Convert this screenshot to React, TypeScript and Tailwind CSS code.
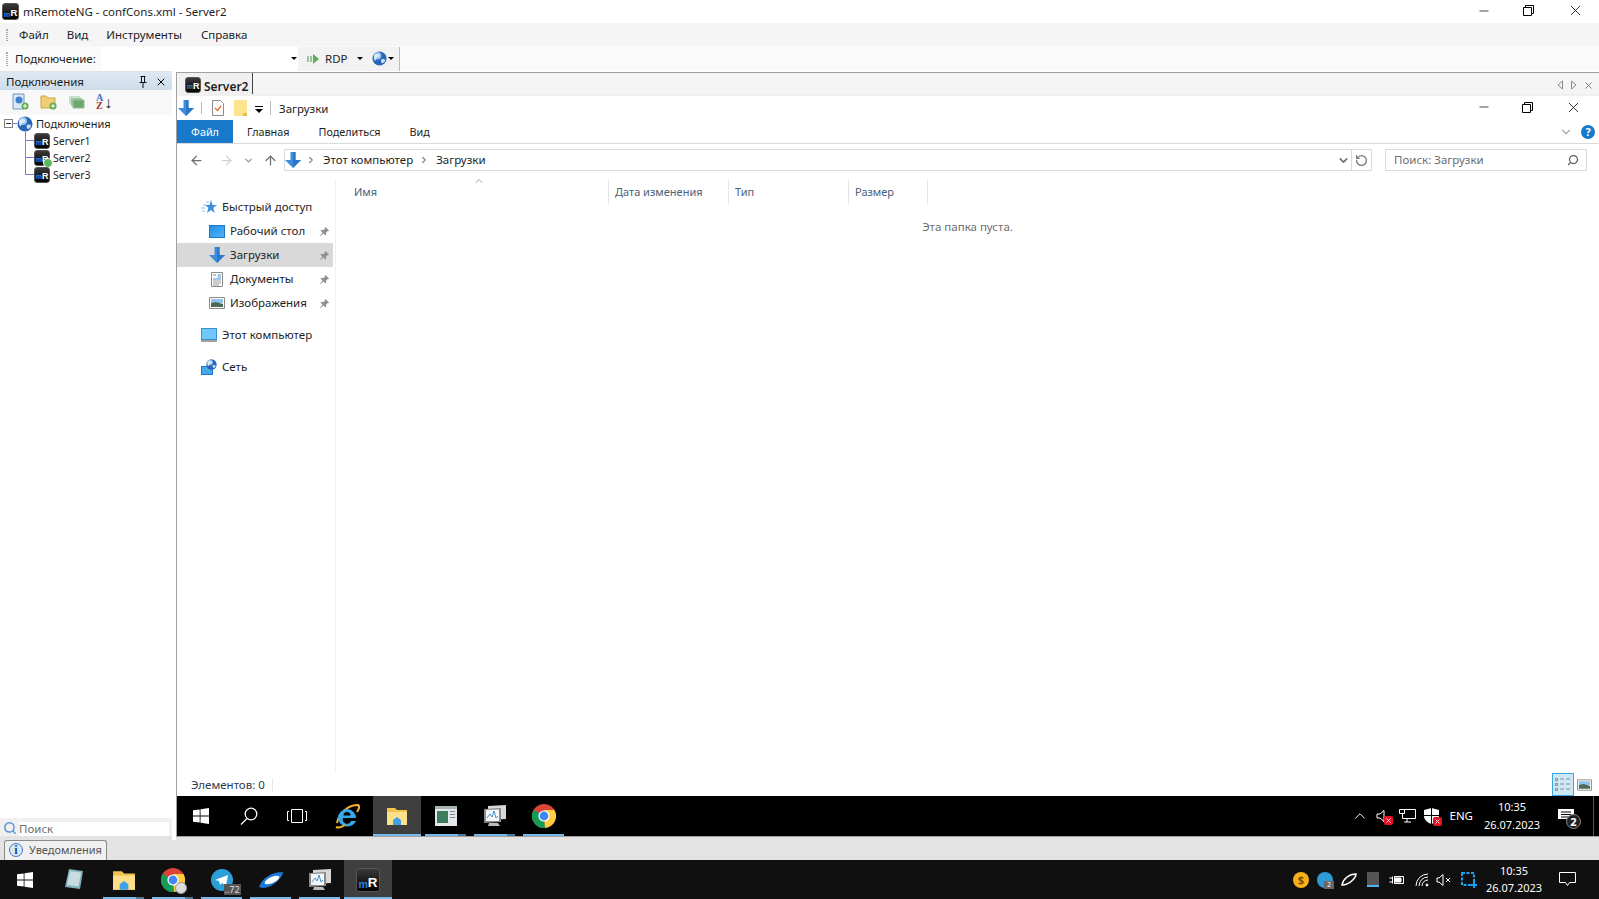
import React from "react";
import { Search, RotateCw, ArrowLeft, ArrowRight, ArrowUp, ChevronDown, ChevronUp, Minus, X, ChevronRight } from "lucide-react";

const MRIcon = ({ size = 16 }: { size?: number }) => (
  <span
    className="flex shrink-0 items-end justify-center rounded-[3px] border border-[#555] bg-gradient-to-b from-[#3a3a3a] to-[#050505] pb-[1px] font-['Liberation_Sans',sans-serif] font-bold leading-none"
    style={{ width: size, height: size, fontSize: size * 0.56 }}
  >
    <span className="text-[#2f7ee0]" style={{ fontSize: size * 0.44 }}>m</span>
    <span className="text-white">R</span>
  </span>
);

const DownArrow = ({ size = 18 }: { size?: number }) => (
  <svg width={size} height={size} viewBox="0 0 16 16" className="shrink-0">
    <path d="M5.5 0h5v8H16l-8 8-8-8h5.5z" fill="#3d8fdc" />
    <path d="M8 0h2.5v8H16l-8 8z" fill="#2a78c6" />
  </svg>
);

const Globe = ({ size = 16 }: { size?: number }) => (
  <svg width={size} height={size} viewBox="0 0 16 16" className="shrink-0">
    <circle cx="8" cy="8" r="7.5" fill="#2a66b8" />
    <circle cx="6" cy="5" r="4" fill="#8fc0ee" />
    <path d="M3 4c2-2 4-1 5 0s0 3-2 3-1 2-2 3-2-1-2-3 0-2 1-3zM10 9c2-1 4 0 4 1s-2 3-3 3-2-3-1-4z" fill="#e8f1fa" opacity=".85" />
  </svg>
);

const WinLogo = ({ size = 16 }: { size?: number }) => (
  <svg width={size} height={size} viewBox="0 0 16 16" className="shrink-0">
    <path d="M0 2.3l6.7-.9v6.2H0zM7.5 1.3L16 0v7.6H7.5zM0 8.4h6.7v6.2L0 13.7zM7.5 8.4H16V16l-8.5-1.2z" fill="#fff" />
  </svg>
);

const FolderIcon = ({ size = 22 }: { size?: number }) => (
  <svg width={size} height={size} viewBox="0 0 22 22" className="shrink-0">
    <path d="M1 3h8l2 2h10v15H1z" fill="#f3c44f" />
    <path d="M1 7h20v13H1z" fill="#fde08a" />
    <path d="M7 20v-5l4-3 4 3v5z" fill="#3ea1e6" />
  </svg>
);

const MonitorApp = ({ size = 24 }: { size?: number }) => (
  <svg width={size} height={size} viewBox="0 0 24 24" className="shrink-0">
    <path d="M5 2l18-1v14L5 16z" fill="#d8d8d8" />
    <path d="M1 5l17-1v14L1 19z" fill="#8a8a8a" />
    <path d="M3 6l13-.6V17H3z" fill="#f4f6f8" />
    <path d="M4 14l3-4 2 3 2-6 2 7 2-2" fill="none" stroke="#4a90d0" strokeWidth="1" />
    <path d="M6 19h9l2 3H5z" fill="#bbb" />
  </svg>
);

const ChromeIcon = ({ size = 24 }: { size?: number }) => (
  <svg width={size} height={size} viewBox="0 0 24 24" className="shrink-0">
    <circle cx="12" cy="12" r="12" fill="#db4437" />
    <path d="M12 12L1.6 18A12 12 0 0 1 1.6 6z" fill="#0f9d58" />
    <path d="M12 12l-10.4 6A12 12 0 0 0 13 24z" fill="#0f9d58" />
    <path d="M12 6h10.4A12 12 0 0 1 13 24l-1-12z" fill="#ffcd40" />
    <circle cx="12" cy="12" r="5.6" fill="#fff" />
    <circle cx="12" cy="12" r="4.4" fill="#4285f4" />
  </svg>
);

const IEIcon = () => (
  <svg width="26" height="26" viewBox="0 0 26 26" className="shrink-0">
    <path d="M3 20C5 10 14 2 24 2c2 1 1 4-1 7" fill="none" stroke="#f0b429" strokeWidth="2" />
    <path d="M4 15a9 9 0 0 1 18 0H9a4 4 0 0 0 8 3h5a9.5 9.5 0 0 1-18-3zm5.5-2.5h7a3.5 3.5 0 0 0-7 0z" fill="#35a8e8" />
    <path d="M2 24c2 1 6 0 9-2" fill="none" stroke="#f0b429" strokeWidth="2" />
  </svg>
);

const AppWindow = () => (
  <svg width="24" height="24" viewBox="0 0 24 24" className="shrink-0">
    <path d="M1 2h22v20H1z" fill="#e4e8ea" />
    <path d="M1 2h22v3H1z" fill="#a9b4b8" />
    <path d="M3 7h11v12H3z" fill="#3b7d5c" />
    <path d="M16 7h5v1h-5zM16 10h5v1h-5zM16 13h5v1h-5z" fill="#7d8a90" />
  </svg>
);

const PinIcon = ({ size = 11, color = "#8a9299" }: { size?: number; color?: string }) => (
  <svg width={size} height={size} viewBox="0 0 12 12" className="shrink-0">
    <path d="M7 1l4 4-1 .6-.6-.2L7.5 7.5 7.8 9.6 7 10.4 4.8 8.2 1.5 11 1 10.5 3.8 7.2 1.6 5 2.4 4.2 4.5 4.5 6.600 2.600 6.400 2z" fill={color} />
  </svg>
);

const NavRow = ({
  icon,
  label,
  pinned,
  active,
  indent,
}: {
  icon: React.ReactNode;
  label: string;
  pinned?: boolean;
  active?: boolean;
  indent?: boolean;
}) => (
  <div className={`flex h-[24px] items-center ${active ? "bg-[#d9d9d9]" : ""} ${indent ? "pl-[29px]" : "pl-[21px]"}`}>
    <span className="flex w-[22px] justify-center">{icon}</span>
    <span className="ml-[2px] flex-1 whitespace-nowrap">{label}</span>
    {pinned && <PinIcon />}
    {pinned && <span className="w-[3px]" />}
  </div>
);

const TaskSlot = ({
  children,
  active,
  running,
  double,
  width = 48,
}: {
  children: React.ReactNode;
  active?: boolean;
  running?: boolean;
  double?: boolean;
  width?: number;
}) => (
  <div
    className={`relative flex h-full shrink-0 items-center justify-center ${active ? "bg-[#3f3f3f]" : ""}`}
    style={{ width }}
  >
    {children}
    {running && (
      <span className={`absolute bottom-0 h-[2px] bg-[#76b9ed] ${active ? "inset-x-0" : "inset-x-[4px]"}`} />
    )}
    {double && <span className="absolute bottom-0 right-[4px] h-[2px] w-[8px] bg-[#4a7896]" />}
  </div>
);

const RedX = () => (
  <span className="absolute -bottom-[2px] -right-[3px] flex h-[9px] w-[9px] items-center justify-center rounded-[2px] bg-[#e81123]">
    <X size={7} strokeWidth={3} className="text-white" />
  </span>
);

const App = () => {
  return (
    <div className="flex h-[899px] w-[1599px] flex-col overflow-hidden bg-[#e3e3e3] font-['Noto_Sans',sans-serif] text-[11.5px] leading-none text-[#1e1e1e]">
      {/* title */}
      <div className="flex h-[23px] items-center bg-white pl-[2px]">
        <MRIcon size={17} />
        <span className="ml-[4px] pt-[1px]">mRemoteNG - confCons.xml - Server2</span>
        <div className="ml-auto mb-[2px] flex items-center">
          <Minus size={14} strokeWidth={1.2} className="mr-[32px] text-black" />
          <svg width="11" height="11" viewBox="0 0 11 11" className="mr-[33px]" fill="none" stroke="#000">
            <path d="M.5 2.5h8v8h-8zM2.5 2.5v-2h8v8h-2" />
          </svg>
          <X size={17} strokeWidth={1.1} className="mr-[15px] text-black" />
        </div>
      </div>
      {/* menu */}
      <div className="flex h-[23px] items-center bg-[#f5f5f5] pl-[6px]">
        <span className="h-[12px] w-[2px] border-x border-dotted border-[#aaa]" />
        <span className="ml-[11px]">Файл</span>
        <span className="ml-[18px]">Вид</span>
        <span className="ml-[18px]">Инструменты</span>
        <span className="ml-[19px]">Справка</span>
      </div>
      {/* toolbar */}
      <div className="flex h-[25px] items-center bg-[#fafafa] pl-[6px]">
        <span className="h-[14px] w-[2px] border-x border-dotted border-[#aaa]" />
        <span className="w-[93px] pl-[7px]">Подключение:</span>
        <div className="flex h-[24px] w-[197px] items-center justify-end bg-white pr-[1px]">
          <span className="h-0 w-0 border-x-[3px] border-t-[3px] border-x-transparent border-t-black" />
        </div>
        <div className="flex h-[24px] w-[102px] items-center border-r border-[#bbb] bg-[#f2f2f2] pl-[9px]">
          <svg width="13" height="12" viewBox="0 0 13 12" className="shrink-0">
            <path d="M0 3h2v6H0zM3 3h2v6H3z" fill="#9bc29b" />
            <path d="M6 1l6 5-6 5z" fill="#5cad5c" />
          </svg>
          <span className="ml-[5px]">RDP</span>
          <span className="ml-[9px] h-0 w-0 border-x-[3px] border-t-[3px] border-x-transparent border-t-black" />
          <span className="ml-[9px]"><Globe size={15} /></span>
          <span className="ml-[1px] h-0 w-0 border-x-[3px] border-t-[3px] border-x-transparent border-t-black" />
        </div>
      </div>
      {/* middle */}
      <div className="flex min-h-0 flex-1">
        <div className="flex w-[172px] shrink-0 flex-col">
          <div className="mt-[1px] flex h-[18px] items-center bg-gradient-to-b from-[#dee8f2] to-[#cfdcea] pl-[6px] pr-[5px] pt-[1px]">
            <span>Подключения</span>
            <svg width="8" height="12" viewBox="0 0 8 12" className="ml-auto shrink-0">
              <path d="M1.5.5h5M2.5.5v6M5.5.5v6M.5 6.5h7" stroke="#111" fill="none" />
              <path d="M4 7v5" stroke="#111" />
              <path d="M5 1h1v5H5z" fill="#111" />
            </svg>
            <X size={12} strokeWidth={2} className="ml-[8px] text-black" />
          </div>
          <div className="flex h-[25px] items-center bg-[#f8f8f8] pb-[2px] pl-[12px]">
            <svg width="17" height="17" viewBox="0 0 17 17" className="shrink-0">
              <path d="M1 1h11v15H1z" fill="#dbe8f6" stroke="#6f95c4" />
              <circle cx="7" cy="7" r="3.5" fill="#3f7fcb" />
              <circle cx="13" cy="13" r="3.5" fill="#62ad50" />
              <path d="M11 13h4M13 11v4" stroke="#fff" />
            </svg>
            <svg width="17" height="16" viewBox="0 0 17 16" className="ml-[11px] shrink-0">
              <path d="M1 2h5l2 2h7v10H1z" fill="#f0cf77" stroke="#c9a540" />
              <circle cx="13" cy="12" r="3.5" fill="#62ad50" />
              <path d="M11 12h4M13 10v4" stroke="#fff" />
            </svg>
            <svg width="17" height="14" viewBox="0 0 17 14" className="ml-[11px] shrink-0">
              <path d="M1 1h11v8H1z" fill="#c8e0c8" />
              <path d="M3 3h11v8H3z" fill="#9cc79c" />
              <path d="M5 5h11v8H5z" fill="#6ea86e" stroke="#8fbf8f" />
            </svg>
            <span className="ml-[11px] flex items-center">
              <span className="flex flex-col font-['Liberation_Serif',serif] text-[10px] font-bold leading-[8px]">
                <span className="text-[#3c6fc0]">A</span>
                <span className="text-[#a03030]">Z</span>
              </span>
              <span className="ml-[1px] text-[16px] leading-none">↓</span>
            </span>
          </div>
          <div className="flex flex-1 flex-col bg-white">
            <div className="flex h-[17px] items-center pl-[4px]">
              <span className="flex h-[9px] w-[9px] items-center justify-center border border-[#808080] text-[8px]">
                <span className="h-[1px] w-[5px] bg-[#333]" />
              </span>
              <span className="h-[1px] w-[4px] bg-[#7b7be8]" />
              <Globe size={16} />
              <span className="ml-[3px] text-[11px]">Подключения</span>
            </div>
            {["Server1", "Server2", "Server3"].map((name, i) => (
              <div key={name} className="relative flex h-[17px] items-center pl-[34px]">
                <span className={`absolute left-[25px] top-0 w-[1px] bg-[#7b7be8] ${i === 2 ? "h-[9px]" : "h-full"}`} />
                <span className="absolute left-[25px] top-[8px] h-[1px] w-[9px] bg-[#7b7be8]" />
                <span className="relative">
                  <MRIcon size={16} />
                  {i === 1 && (
                    <span className="absolute -bottom-[2px] -right-[3px] h-[10px] w-[10px] rounded-full border border-white bg-[#5cb85c]" />
                  )}
                </span>
                <span className="ml-[3px] pt-[2px] text-[10.5px]">{name}</span>
              </div>
            ))}
          </div>
          <div className="flex h-[18px] items-end bg-[#f0f0f0] pl-[3px]">
            <Search size={14} strokeWidth={2.5} className="mb-[1px] text-[#5c93d6]" />
            <span className="ml-[2px] flex h-[14px] w-[150px] items-center bg-white text-[#6d6d6d]">Поиск</span>
          </div>
          <div className="h-[4px]" />
        </div>
        <div className="flex min-w-0 flex-1 flex-col bg-white">
          <div className="ml-[4px] mt-[1px] flex min-h-0 flex-1 flex-col border-l border-t border-[#a0a0a0] bg-white">
            {/* tab strip */}
            <div className="flex h-[23px] shrink-0 items-stretch border-b-2 border-[#f0f0f0] bg-[#f5f5f5]">
              <div className="ml-[2px] flex w-[74px] items-center border-r border-[#444] bg-[#f0f0f0] pl-[6px] pt-[2px]">
                <MRIcon size={16} />
                <span className="ml-[3px] pt-[4px] text-[12px] font-semibold">Server2</span>
              </div>
              <div className="ml-auto flex items-center pr-[5px] pt-[3px] text-[#777]">
                <svg width="7" height="10" viewBox="0 0 7 10" fill="none" stroke="#8a8a8a"><path d="M5.5 1L1 5l4.5 4z" /></svg>
                <svg width="7" height="10" viewBox="0 0 7 10" fill="none" stroke="#8a8a8a" className="ml-[6px]"><path d="M1.5 1L6 5 1.5 9z" /></svg>
                <X size={11} strokeWidth={2} className="ml-[6px]" />
              </div>
            </div>
            {/* explorer quick access */}
            <div className="flex h-[24px] shrink-0 items-center bg-white pl-[1px]">
              <DownArrow size={16} />
              <span className="ml-[7px] h-[12px] w-[1px] bg-[#bbb]" />
              <svg width="14" height="16" viewBox="0 0 14 16" className="ml-[9px] shrink-0">
                <path d="M1.5.5h8l3 3v12h-11z" fill="#fff" stroke="#8a8a8a" />
                <path d="M4 8l2.5 2.5L10 6" fill="none" stroke="#e8672e" strokeWidth="1.3" />
              </svg>
              <svg width="13" height="16" viewBox="0 0 13 16" className="ml-[9px] shrink-0">
                <path d="M0 0h13v16H0z" fill="#fde58f" />
                <path d="M9 13h4v3H9z" fill="#e8bd4e" />
              </svg>
              <svg width="8" height="7" viewBox="0 0 8 7" className="ml-[8px] mt-[3px] shrink-0">
                <path d="M0 0h8v1H0zM0 3h8L4 7z" fill="#000" />
              </svg>
              <span className="ml-[7px] h-[14px] w-[1px] bg-[#bbb]" />
              <span className="ml-[8px] pt-[2px]">Загрузки</span>
              <div className="ml-auto mb-[2px] flex items-center">
                <Minus size={14} strokeWidth={1.2} className="mr-[31px] text-black" />
                <svg width="11" height="11" viewBox="0 0 11 11" className="mr-[32px]" fill="none" stroke="#000">
                  <path d="M.5 2.5h8v8h-8zM2.5 2.5v-2h8v8h-2" />
                </svg>
                <X size={17} strokeWidth={1.1} className="mr-[17px] text-black" />
              </div>
            </div>
            {/* ribbon tabs */}
            <div className="flex h-[24px] shrink-0 items-stretch border-b border-[#dadada] pr-[4px] text-[10.8px]">
              <span className="flex w-[56px] items-center justify-center bg-[#1979ca] pt-[1px] text-white">Файл</span>
              <span className="ml-[14px] flex items-center pt-[1px]">Главная</span>
              <span className="ml-[29px] flex items-center pt-[1px]">Поделиться</span>
              <span className="ml-[29px] flex items-center pt-[1px]">Вид</span>
              <div className="ml-auto flex items-center">
                <ChevronDown size={14} className="text-[#a8a8a8]" />
                <span className="ml-[8px] flex h-[14px] w-[14px] items-center justify-center rounded-full bg-[#1979ca] text-[11px] font-bold text-white">?</span>
              </div>
            </div>
            {/* address bar */}
            <div className="flex h-[35px] shrink-0 items-center pb-[3px] pl-[12px] pr-[12px]">
              <ArrowLeft size={15} className="text-[#6d6d6d]" />
              <ArrowRight size={15} className="ml-[15px] text-[#d2d2d2]" />
              <ChevronDown size={11} strokeWidth={3} className="ml-[9px] text-[#9a9a9a]" />
              <ArrowUp size={15} className="ml-[9px] text-[#6d6d6d]" />
              <div className="ml-[6px] flex h-[22px] flex-1 items-center border border-[#d9d9d9]">
                <DownArrow size={16} />
                <ChevronRight size={10} strokeWidth={3} className="ml-[5px] text-[#8a8a8a]" />
                <span className="ml-[7px]">Этот компьютер</span>
                <ChevronRight size={10} strokeWidth={3} className="ml-[6px] text-[#8a8a8a]" />
                <span className="ml-[7px]">Загрузки</span>
                <ChevronDown size={13} strokeWidth={3} className="ml-auto mr-[1px] text-[#6d6d6d]" />
                <span className="flex h-full w-[20px] items-center justify-center border-l border-[#d9d9d9]">
                  <RotateCw size={13} strokeWidth={2.4} className="-scale-x-100 text-[#7a7a7a]" />
                </span>
              </div>
              <div className="ml-[13px] flex h-[22px] w-[202px] items-center border border-[#d9d9d9] pl-[8px] text-[#6d6d6d]">
                <span>Поиск: Загрузки</span>
                <Search size={12} strokeWidth={2.5} className="ml-auto mr-[7px] -scale-x-100 text-[#5e5e5e]" />
              </div>
            </div>
            {/* explorer body */}
            <div className="flex min-h-0 flex-1">
              <div className="flex w-[159px] shrink-0 flex-col border-r border-[#f0f0f0] pr-[2px] pt-[16px] text-[#1e1e1e]">
                <NavRow label="Быстрый доступ" icon={
                  <svg width="16" height="15" viewBox="0 0 16 15">
                    <path d="M10 0l1.5 5H16l-3.7 2.8L13.7 13 10 10l-4 3 1.4-5.2L4 5h4.5z" fill="#3d8fdc" />
                    <path d="M5 2h3M2 5h3M0 8h4M1 11h3" stroke="#8cc0ec" />
                  </svg>
                } />
                <NavRow indent pinned label="Рабочий стол" icon={<span className="block h-[13px] w-[16px] border border-[#1a78c8] bg-gradient-to-br from-[#1f8fe8] to-[#4fb2f5]" />} />
                <NavRow indent pinned active label="Загрузки" icon={<DownArrow size={16} />} />
                <NavRow indent pinned label="Документы" icon={
                  <svg width="12" height="15" viewBox="0 0 12 15">
                    <path d="M.5.5h11v14H.5z" fill="#fff" stroke="#8a8a8a" />
                    <path d="M2 3h3M6.5 3h3.5M6.5 5h3.5M2 7h8" stroke="#4a90d0" />
                    <path d="M2 9h8M2 11h8M2 13h6" stroke="#9a9a9a" />
                  </svg>
                } />
                <NavRow indent pinned label="Изображения" icon={
                  <svg width="16" height="12" viewBox="0 0 16 12">
                    <path d="M.5.5h15v11H.5z" fill="#fff" stroke="#8a8a8a" />
                    <path d="M2 2h12v4H2z" fill="#8cc4ef" />
                    <path d="M2 6l5-1 7 2v3H2z" fill="#4d6a57" />
                  </svg>
                } />
                <div className="h-[8px]" />
                <NavRow label="Этот компьютер" icon={
                  <span className="flex flex-col items-center">
                    <span className="block h-[12px] w-[16px] border border-[#3a8fd0] bg-[#70c8f8]" />
                    <span className="block h-[2px] w-[16px] bg-[#a0a0a0]" />
                  </span>
                } />
                <div className="h-[8px]" />
                <NavRow label="Сеть" icon={
                  <span className="relative flex h-[16px] w-[16px] items-end">
                    <span className="absolute right-0 top-0"><Globe size={11} /></span>
                    <span className="block h-[9px] w-[12px] border border-[#1a78c8] bg-[#48a8ec]" />
                  </span>
                } />
              </div>
              <div className="flex min-w-0 flex-1 flex-col">
                <div className="relative flex h-[26px] items-stretch text-[11px] text-[#4c607a]">
                  <span className="flex w-[272px] items-center pb-[2px] pl-[18px]">Имя</span>
                  <span className="flex w-[120px] items-center border-l border-[#e5e5e5] pb-[2px] pl-[6px]">Дата изменения</span>
                  <span className="flex w-[120px] items-center border-l border-[#e5e5e5] pb-[2px] pl-[6px]">Тип</span>
                  <span className="flex w-[80px] items-center border-x border-[#e5e5e5] pb-[2px] pl-[6px]">Размер</span>
                  <ChevronUp size={12} strokeWidth={1.5} className="absolute left-[137px] top-[-4px] text-[#8a8a8a]" />
                </div>
                <div className="pt-[16px] text-center text-[#6d6d6d]">Эта папка пуста.</div>
              </div>
            </div>
            {/* status */}
            <div className="flex h-[24px] shrink-0 items-center pl-[14px] pr-[4px] pt-[1px] text-[#2b3a55]">
              <span className="flex h-[14px] w-[82px] items-center border-r border-[#e8e8e8]">Элементов: 0</span>
              <span className="ml-auto flex h-[23px] w-[22px] items-center justify-center border border-[#3da5de] bg-[#cce8f7]">
                <svg width="16" height="14" viewBox="0 0 16 14">
                  <path d="M.5.5h2v2h-2zM.5 5.5h2v2h-2zM.5 10.5h2v2h-2z" fill="none" stroke="#8a8a8a" />
                  <path d="M5 1h4M11 1h4M5 6h4M11 6h4M5 11h4M11 11h4" stroke="#8a8a8a" />
                </svg>
              </span>
              <svg width="15" height="12" viewBox="0 0 16 12" className="ml-[3px] mr-[3px]">
                <path d="M.5.5h15v11H.5z" fill="#fff" stroke="#8a8a8a" />
                <path d="M2 2h12v4H2z" fill="#8cc4ef" />
                <path d="M2 6l5-1 7 2v3H2z" fill="#4d6a57" />
              </svg>
            </div>
            {/* inner taskbar */}
            <div className="flex h-[40px] shrink-0 items-center bg-black text-white">
              <TaskSlot><WinLogo size={16} /></TaskSlot>
              <TaskSlot>
                <svg width="18" height="18" viewBox="0 0 18 18" fill="none" stroke="#fff" strokeWidth="1.3">
                  <circle cx="11" cy="7" r="5.8" /><path d="M7 11.5l-6 6" />
                </svg>
              </TaskSlot>
              <TaskSlot>
                <svg width="20" height="16" viewBox="0 0 20 16" fill="none" stroke="#fff">
                  <path d="M4.5 1.5h11v13h-11zM2 3.5H.5v9H2M18 3.5h1.5v9H18" />
                </svg>
              </TaskSlot>
              <TaskSlot width={52}><IEIcon /></TaskSlot>
              <TaskSlot active running><FolderIcon size={22} /></TaskSlot>
              <TaskSlot running double width={49}><AppWindow /></TaskSlot>
              <TaskSlot running double width={49}><MonitorApp /></TaskSlot>
              <TaskSlot running width={49}><ChromeIcon size={24} /></TaskSlot>
              <div className="ml-auto flex items-center pr-[5px]">
                <ChevronUp size={18} strokeWidth={1.3} />
                <span className="relative ml-[7px]"><svg width="14" height="14" viewBox="0 0 14 14" fill="none" stroke="#fff"><path d="M1 5h3l4-3.5v11L4 9H1z" /></svg><RedX /></span>
                <svg width="17" height="14" viewBox="0 0 17 14" fill="none" stroke="#fff" className="ml-[9px]"><path d="M3.5.5h13v9h-13zM8 9.5V13M5 13h7" /><path d="M.5.5h5v4h-5z" fill="#000" /></svg>
                <span className="relative ml-[8px]">
                  <svg width="15" height="16" viewBox="0 0 15 16"><path d="M7.5 0L15 2v6c0 4-4 7-7.5 8C4 15 0 12 0 8V2z" fill="#fff" /><path d="M7 0h1v16H7zM0 7h15v1H0z" fill="#000" /></svg>
                  <RedX />
                </span>
                <span className="ml-[10px]">ENG</span>
                <span className="mb-[2px] ml-[11px] flex w-[56px] flex-col items-center gap-[7px] text-[11px]">
                  <span>10:35</span>
                  <span>26.07.2023</span>
                </span>
                <span className="relative ml-[18px] mr-[19px]">
                  <svg width="16" height="14" viewBox="0 0 16 14"><path d="M0 0h16v10h-4l-3 3V10H0z" fill="#fff" /><path d="M3 3h10M3 5.5h10M3 8h7" stroke="#000" /></svg>
                  <span className="absolute -bottom-[6px] -right-[7px] flex h-[15px] w-[15px] items-center justify-center rounded-full border border-[#888] bg-[#222] text-[11px] font-bold">2</span>
                </span>
                <span className="h-[40px] w-[1px] bg-[#555]" />
              </div>
            </div>
          </div>
          <div className="ml-[4px] h-[4px] shrink-0 border-t border-[#a0a0a0] bg-[#e3e3e3]" />
        </div>
      </div>
      {/* notifications */}
      <div className="flex h-[20px] shrink-0 items-end pl-[4px]">
        <div className="flex h-[20px] w-[103px] items-center rounded-t-[3px] border border-b-0 border-[#8a8a8a] bg-[#f0f0f0] pb-[2px] pl-[4px] text-[11px] text-[#555]">
          <span className="flex h-[14px] w-[14px] items-center justify-center rounded-full border border-[#3a78c8] bg-[#d8e8f8] font-['Liberation_Serif',serif] text-[12px] font-bold text-[#1a4a90]">i</span>
          <span className="ml-[6px]">Уведомления</span>
        </div>
      </div>
      {/* taskbar */}
      <div className="flex h-[39px] shrink-0 items-center bg-[#101010] text-white">
        <TaskSlot width={49}><WinLogo size={16} /></TaskSlot>
        <TaskSlot width={50}>
          <svg width="22" height="24" viewBox="0 0 22 24"><path d="M6 1l14 2-3 18-15-2z" fill="#7fb0bc" /><path d="M7 3l11 1.5-2.5 14L4 17z" fill="#c8dde0" /></svg>
        </TaskSlot>
        <TaskSlot running double width={49}><FolderIcon size={24} /></TaskSlot>
        <TaskSlot running double width={49}>
          <span className="relative"><ChromeIcon size={24} /><span className="absolute -bottom-[2px] -right-[2px] h-[12px] w-[12px] rounded-full border border-[#999] bg-[#ddd]" /></span>
        </TaskSlot>
        <TaskSlot running width={49}>
          <span className="relative">
            <svg width="24" height="24" viewBox="0 0 24 24"><circle cx="12" cy="12" r="11" fill="#2d9fd8" /><path d="M5 12l13-5-2 11-4-3-2 2-1-4z" fill="#fff" /></svg>
            <span className="absolute -bottom-[3px] -right-[7px] flex h-[11px] w-[17px] items-center justify-center bg-[#555] text-[9px] text-[#ddd]">..72</span>
          </span>
        </TaskSlot>
        <TaskSlot running width={49}>
          <svg width="26" height="18" viewBox="0 0 26 18"><path d="M1 16C4 7 14 1 25 1c0 4-8 15-20 16z" fill="#1a78d8" /><ellipse cx="14" cy="9" rx="8" ry="3" transform="rotate(-25 14 9)" fill="#fff" /></svg>
        </TaskSlot>
        <TaskSlot running width={49}><MonitorApp size={24} /></TaskSlot>
        <TaskSlot active running width={48}><MRIcon size={24} /></TaskSlot>
        <div className="ml-auto flex items-center pr-[23px]">
          <span className="flex h-[16px] w-[16px] items-center justify-center rounded-full bg-[#f5b21a] text-[11px] font-bold text-[#7a4a00]">$</span>
          <span className="relative ml-[8px] block h-[16px] w-[16px] rounded-full bg-[#2e9bd8]">
            <span className="absolute -bottom-[1px] -right-[1px] flex h-[8px] w-[10px] items-center justify-center bg-[#666] text-[7px] text-white">2</span>
          </span>
          <svg width="16" height="13" viewBox="0 0 16 13" className="ml-[8px]"><path d="M1 12C2 6 8 1 15 1c0 3-5 10-13 11z" fill="none" stroke="#fff" strokeWidth="1.5" /></svg>
          <span className="ml-[10px] flex h-[15px] w-[12px] flex-col justify-end border-b-2 border-[#4fb3f0] bg-[#555]" />
          <svg width="16" height="12" viewBox="0 0 16 12" fill="none" stroke="#fff" className="ml-[10px]"><path d="M5.5 2.5h9v7h-9zM.5 4h3M.5 8h3M3.5 2.5v7" /><path d="M6 4h6v4H6z" fill="#fff" /></svg>
          <svg width="15" height="14" viewBox="0 0 15 14" fill="none" stroke="#fff" className="ml-[10px]"><path d="M1 13a12 12 0 0 1 12-12M4 13a9 9 0 0 1 9-9M7 13a6 6 0 0 1 6-6" /><circle cx="12" cy="12" r="1" fill="#fff" /></svg>
          <svg width="15" height="14" viewBox="0 0 15 14" fill="none" stroke="#fff" className="ml-[6px]"><path d="M1 5h2l4-3.5v11L3 9H1zM10 5l4 4M14 5l-4 4" /></svg>
          <svg width="16" height="16" viewBox="0 0 16 16" fill="none" stroke="#17a2f2" strokeWidth="2" className="ml-[10px]"><path d="M1 1h12v12H1z" strokeDasharray="3 1.5" /><path d="M13 10v6M10 13h6" /></svg>
          <span className="mb-[2px] ml-[9px] flex w-[56px] flex-col items-center gap-[6px] text-[11px]">
            <span>10:35</span>
            <span>26.07.2023</span>
          </span>
          <svg width="17" height="15" viewBox="0 0 17 15" fill="none" stroke="#fff" className="ml-[17px]"><path d="M.5.5h16v10h-6l-2 3-2-3h-6z" /></svg>
        </div>
      </div>
    </div>
  );
};

export default App;
